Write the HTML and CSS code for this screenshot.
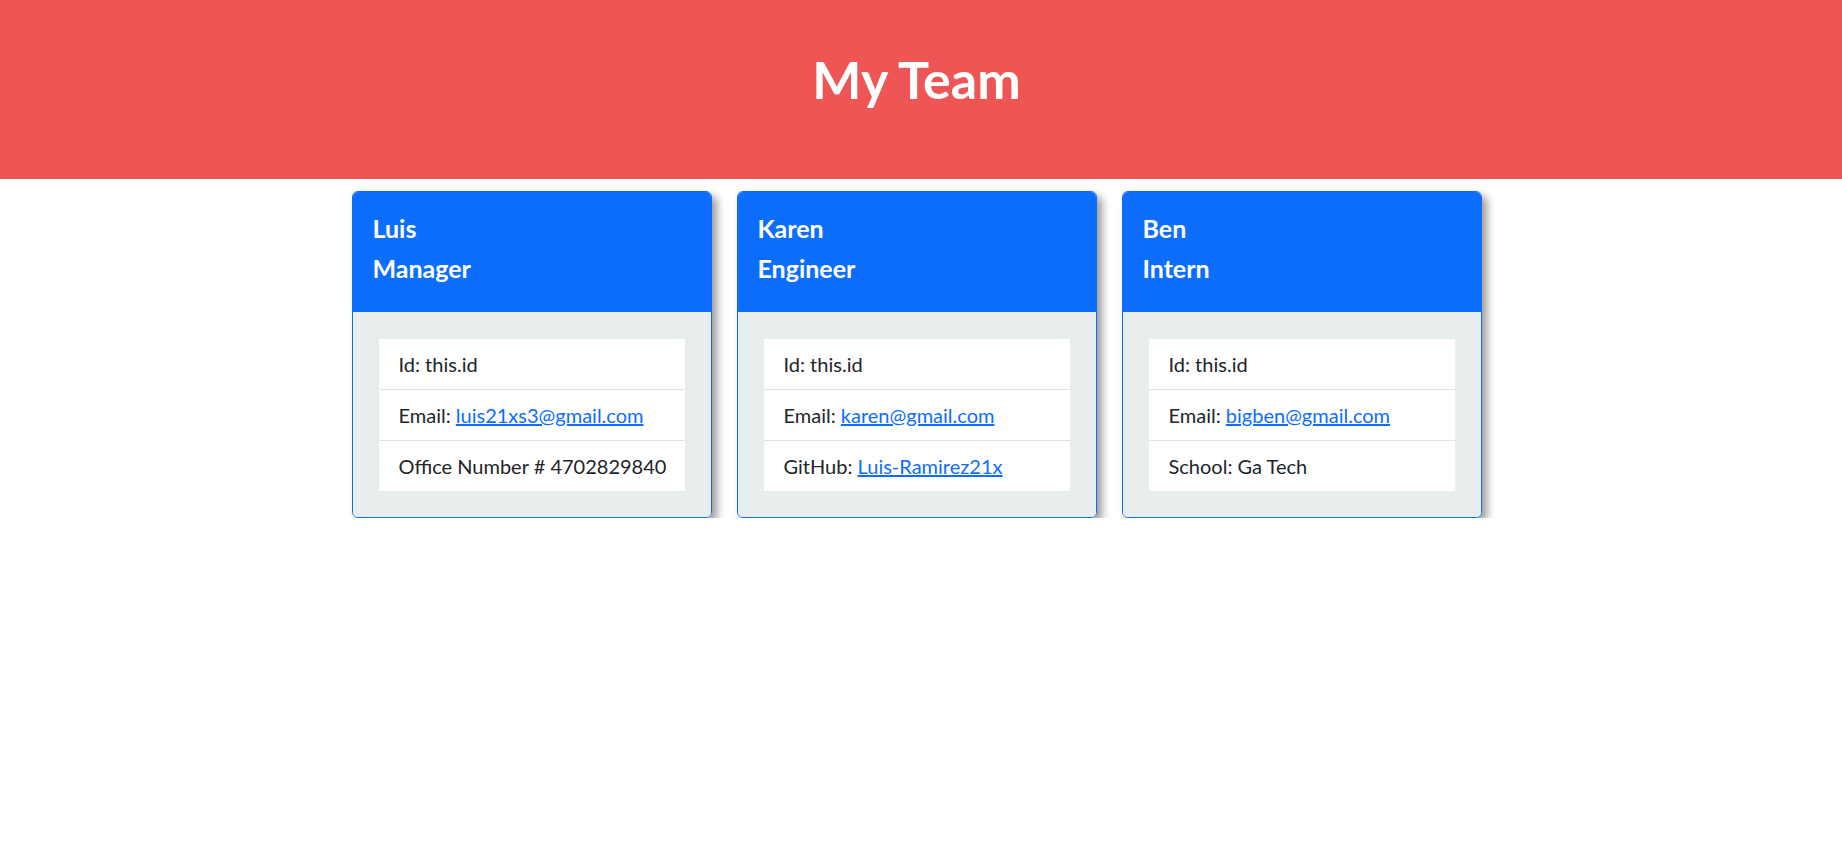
FILE: index.html
```html
<!DOCTYPE html>
<html lang="en">
<head>
    <meta charset="UTF-8">
    <meta name="viewport" content="width=device-width, initial-scale=1.0">
    <title>My Team</title>
    <link rel="stylesheet" href="styles.css">
</head>
<body>
    <header class="banner">
        <h1>My Team</h1>
    </header>

    <main class="team-row">
        <div class="card">
            <div class="card-header">
                <h5>Luis</h5>
                <h5>Manager</h5>
            </div>
            <div class="card-body">
                <ul class="info-list">
                    <li>Id: this.id</li>
                    <li>Email: <a href="mailto:luis21xs3@gmail.com">luis21xs3@gmail.com</a></li>
                    <li>Office Number # 4702829840</li>
                </ul>
            </div>
        </div>

        <div class="card">
            <div class="card-header">
                <h5>Karen</h5>
                <h5>Engineer</h5>
            </div>
            <div class="card-body">
                <ul class="info-list">
                    <li>Id: this.id</li>
                    <li>Email: <a href="mailto:karen@gmail.com">karen@gmail.com</a></li>
                    <li>GitHub: <a href="#">Luis-Ramirez21x</a></li>
                </ul>
            </div>
        </div>

        <div class="card">
            <div class="card-header">
                <h5>Ben</h5>
                <h5>Intern</h5>
            </div>
            <div class="card-body">
                <ul class="info-list">
                    <li>Id: this.id</li>
                    <li>Email: <a href="mailto:bigben@gmail.com">bigben@gmail.com</a></li>
                    <li>School: Ga Tech</li>
                </ul>
            </div>
        </div>
    </main>
</body>
</html>
```

FILE: styles.css
```css
body {
    margin: 0;
    font-family: Lato, "Open Sans", sans-serif;
    color: #212529;
    background-color: #fff;
}

.banner {
    background-color: #ee5555;
    height: 179px;
    box-sizing: border-box;
    padding-top: 49px;
}

.banner h1 {
    margin: 0;
    padding-right: 9px;
    text-align: center;
    color: #fff;
    font-size: 52px;
    font-weight: 700;
    line-height: 60px;
}

.team-row {
    display: flex;
    align-items: flex-start;
    justify-content: center;
    gap: 25px;
    padding-top: 12px;
    padding-right: 9px;
}

.card {
    width: 360px;
    box-sizing: border-box;
    border: 1px solid #0d6efd;
    border-radius: 6px;
    overflow: hidden;
    box-shadow: 5px 5px 8px rgba(0, 0, 0, 0.4);
}

.card-header {
    background-color: #0d6efd;
    color: #fff;
    padding: 21px 20px 9px;
    height: 120px;
    box-sizing: border-box;
}

.card-header h5 {
    margin: 0 0 10px;
    font-size: 25px;
    font-weight: 700;
    line-height: 30px;
}

.card-body {
    background-color: #e8eded;
    padding: 27px 26px 26px;
}

.info-list {
    list-style-type: none;
    margin: 0;
    padding: 0;
    background-color: #fff;
}

.info-list li {
    padding: 10px 12px 10px 20px;
    font-size: 20px;
    line-height: 30px;
    white-space: nowrap;
    border-bottom: 1px solid #dee2e6;
}

.info-list li:last-child {
    border-bottom: none;
}

.info-list a {
    color: #0d6efd;
}
```
